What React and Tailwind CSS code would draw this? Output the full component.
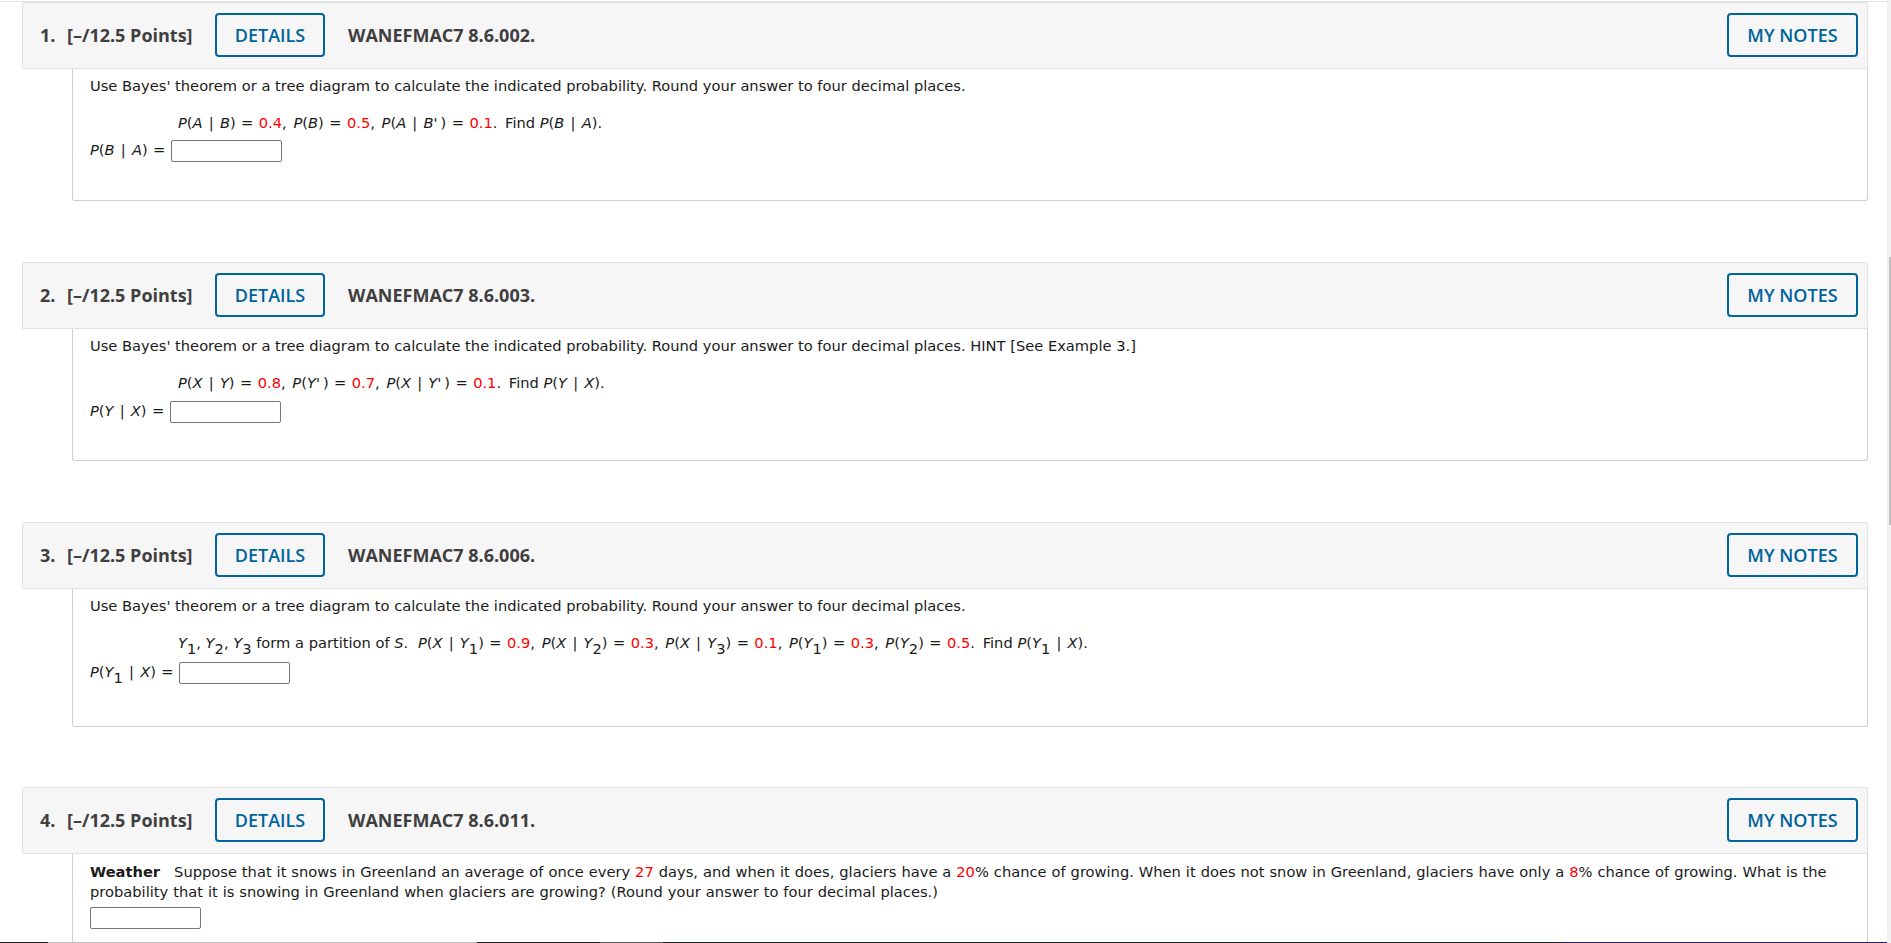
function R({ children }) {
  return <span className="text-[#ff0000]">{children}</span>;
}
function I({ children }) {
  return <i>{children}</i>;
}
function S({ children }) {
  return <span className="align-[-6px] leading-[0]">{children}</span>;
}
function Bar() {
  return <span className="mx-[1.5px]">|</span>;
}
function Eq() {
  return <span className="mx-[0.75px]">=</span>;
}
function C() {
  return <span className="mr-[2px]">,</span>;
}
function Dot() {
  return <span className="mr-[3px]">.</span>;
}
function Prime() {
  return <i className="mr-[3px]">'</i>;
}

function Question({ n, code, gap = "mb-[61px]", bodyClass, children }) {
  return (
    <section className={`shrink-0 ${gap}`}>
      <header className="flex h-[67px] items-center rounded-t-[2px] border border-[#e2e2e2] bg-[#f6f6f6] pb-px pl-[17px] pr-[9px] font-['Open_Sans',sans-serif] text-[18px] font-semibold text-[#3f3f3f]">
        <span className="w-[27px] font-bold">{n}.</span>
        <span className="w-[148px] font-bold">[–/12.5 Points]</span>
        <button className="h-[44px] w-[110px] rounded-[4px] border-2 border-[#00649c] text-[#00649c]">DETAILS</button>
        <span className="ml-[23px] font-bold">{code}</span>
        <button className="ml-auto h-[44px] w-[131px] rounded-[4px] border-2 border-[#00649c] text-[#00649c]">MY NOTES</button>
      </header>
      <div className={`ml-[50px] rounded-b-[3px] border-x border-b border-[#cfcfcf] pl-[17px] pr-[16px] font-['DejaVu_Sans',sans-serif] text-[14.67px] text-[#1a1a1a] ${bodyClass}`}>
        {children}
      </div>
    </section>
  );
}

function Input({ className = "" }) {
  return <span className={`inline-block h-[22px] w-[111px] rounded-[2px] border border-[#767676] bg-white align-middle ${className}`} />;
}

export default function App() {
  return (
    <div className="flex h-[943px] w-[1891px] overflow-hidden bg-white">
      <div className="flex min-w-0 flex-1 flex-col">
        <div className="mt-px h-px shrink-0 bg-[#e0e0e0]" />
        <main className="min-h-0 flex-1 overflow-hidden pl-[22px] pr-[19px]">
          <Question n={1} code="WANEFMAC7 8.6.002." bodyClass="h-[132px]">
            <p className="pt-[8px] leading-[18px]">Use Bayes' theorem or a tree diagram to calculate the indicated probability. Round your answer to four decimal places.</p>
            <p className="mt-[19px] pl-[88px] leading-[18px]"><I>P</I>(<I>A</I> <Bar /> <I>B</I>) <Eq /> <R>0.4</R><C /> <I>P</I>(<I>B</I>) <Eq /> <R>0.5</R><C /> <I>P</I>(<I>A</I> <Bar /> <I>B</I><Prime />) <Eq /> <R>0.1</R><Dot /> Find <I>P</I>(<I>B</I> <Bar /> <I>A</I>).</p>
            <p className="mt-[6px] leading-[24px]"><I>P</I>(<I>B</I> <Bar /> <I>A</I>) <Eq /> <Input /></p>
          </Question>
          <Question n={2} code="WANEFMAC7 8.6.003." bodyClass="h-[132px]">
            <p className="pt-[8px] leading-[18px]">Use Bayes' theorem or a tree diagram to calculate the indicated probability. Round your answer to four decimal places. HINT [See Example 3.]</p>
            <p className="mt-[19px] pl-[88px] leading-[18px]"><I>P</I>(<I>X</I> <Bar /> <I>Y</I>) <Eq /> <R>0.8</R><C /> <I>P</I>(<I>Y</I><Prime />) <Eq /> <R>0.7</R><C /> <I>P</I>(<I>X</I> <Bar /> <I>Y</I><Prime />) <Eq /> <R>0.1</R><Dot /> Find <I>P</I>(<I>Y</I> <Bar /> <I>X</I>).</p>
            <p className="mt-[7px] leading-[24px]"><I>P</I>(<I>Y</I> <Bar /> <I>X</I>) <Eq /> <Input /></p>
          </Question>
          <Question n={3} code="WANEFMAC7 8.6.006." gap="mb-[60px]" bodyClass="h-[138px]">
            <p className="pt-[8px] leading-[18px]">Use Bayes' theorem or a tree diagram to calculate the indicated probability. Round your answer to four decimal places.</p>
            <p className="mt-[19px] pl-[88px] leading-[18px]"><I>Y</I><S>1</S>, <I>Y</I><S>2</S>, <I>Y</I><S>3</S> form a partition of <I>S</I><span className="mr-[5px]">.</span> <I>P</I>(<I>X</I> <Bar /> <I>Y</I><S>1</S>) <Eq /> <R>0.9</R><C /> <I>P</I>(<I>X</I> <Bar /> <I>Y</I><S>2</S>) <Eq /> <R>0.3</R><C /> <I>P</I>(<I>X</I> <Bar /> <I>Y</I><S>3</S>) <Eq /> <R>0.1</R><C /> <I>P</I>(<I>Y</I><S>1</S>) <Eq /> <R>0.3</R><C /> <I>P</I>(<I>Y</I><S>2</S>) <Eq /> <R>0.5</R><Dot /> Find <I>P</I>(<I>Y</I><S>1</S> <Bar /> <I>X</I>).</p>
            <p className="mt-[8px] leading-[24px]"><I>P</I>(<I>Y</I><S>1</S> <Bar /> <I>X</I>) <Eq /> <Input /></p>
          </Question>
          <Question n={4} code="WANEFMAC7 8.6.011." bodyClass="h-[132px]">
            <p className="pt-[8px] leading-[20px] [word-spacing:0.3px]"><b className="mr-[14px]">Weather</b>Suppose that it snows in Greenland an average of once every <R>27</R> days, and when it does, glaciers have a <R>20</R>% chance of growing. When it does not snow in Greenland, glaciers have only a <R>8</R>% chance of growing. What is the probability that it is snowing in Greenland when glaciers are growing? (Round your answer to four decimal places.)</p>
            <p className="mt-[3px] leading-[24px]"><Input /></p>
          </Question>
        </main>
        <div className="flex h-px shrink-0">
          <div className="w-[48px] bg-[#1c2020]" />
          <div className="w-[429px] bg-[#bdbdbd]" />
          <div className="w-[123px] bg-[#1c2020]" />
          <div className="w-[63px] bg-[#555555]" />
          <div className="w-[900px] bg-[#1c2626]" />
          <div className="flex-1 bg-[#2a2060]" />
        </div>
      </div>
      <aside className="flex w-[4px] shrink-0 flex-col bg-[#f1f1f1] pl-[2px] pt-[257px]">
        <div className="h-[268px] bg-[#c1c1c1]" />
      </aside>
    </div>
  );
}
